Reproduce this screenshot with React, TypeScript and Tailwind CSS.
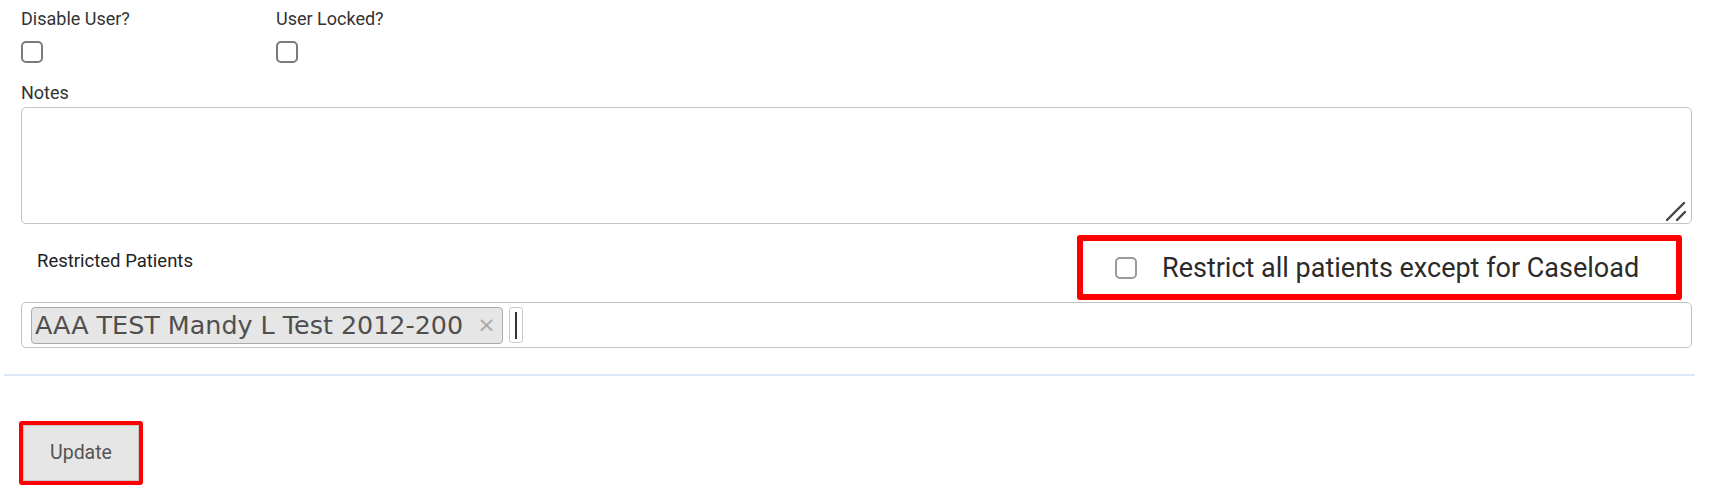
import { useState } from 'react';

const roboto = { fontFamily: 'Roboto, "Liberation Sans", sans-serif' };

function Box({ light }: { light?: boolean }) {
  return (
    <span
      className={
        'block w-[22px] h-[22px] rounded-[5px] bg-white border-2 ' +
        (light ? 'border-[#9a9a9a]' : 'border-[#7b7b7b]')
      }
    />
  );
}

export default function App() {
  const [notes, setNotes] = useState('');

  return (
    <div className="w-[1721px] h-[504px] bg-white text-[#333]" style={roboto}>
      <div className="pl-[21px] pr-[29px] pt-[8px]">
        {/* flags */}
        <div className="flex">
          <div className="w-[255px]">
            <div className="text-[18px] leading-[22px]">Disable User?</div>
            <div className="mt-[11px]">
              <Box />
            </div>
          </div>
          <div>
            <div className="text-[18px] leading-[22px]">User Locked?</div>
            <div className="mt-[11px]">
              <Box />
            </div>
          </div>
        </div>

        <div className="mt-[19px] text-[18px] leading-[22px]">Notes</div>
        <div className="relative mt-[3px] h-[117px]">
          <textarea
            value={notes}
            onChange={(e) => setNotes(e.target.value)}
            className="block w-full h-full resize-none rounded-[5px] border border-[#c4c4c4] bg-white outline-none"
          />
          <svg className="absolute right-[5px] bottom-[2px]" width="22" height="22" viewBox="0 0 22 22">
            <line x1="2" y1="20" x2="19" y2="3" stroke="#444" strokeWidth="2.4" strokeLinecap="round" />
            <line x1="12" y1="20" x2="20" y2="12" stroke="#444" strokeWidth="2.4" strokeLinecap="round" />
          </svg>
        </div>

        {/* restricted patients */}
        <div className="flex justify-between items-start">
          <div className="ml-[16px] mt-[26px] text-[18.5px] leading-[22px] text-[#222]">Restricted Patients</div>
          <div className="mt-[11px] mr-[10px] w-[605px] h-[65px] border-[6px] border-[#ff0000] rounded-[3px] flex items-center pl-[32px]">
            <Box light />
            <span className="ml-[25px] text-[27px] leading-[30px] text-[#2b2b2b]">
              Restrict all patients except for Caseload
            </span>
          </div>
        </div>

        <div className="mt-[2px] h-[46px] rounded-[5px] border border-[#c4c4c4] flex items-center pl-[9px] gap-[6px]">
          <div
            className="h-[37px] flex items-center rounded-[4px] border border-[#aaa] bg-[#e6e6e6] pl-[3px] pr-[6px] text-[#4f4f4f]"
            style={{ fontFamily: '"DejaVu Sans", Verdana, sans-serif' }}
          >
            <span className="text-[25.4px] leading-[30px]">AAA TEST Mandy L Test 2012-200</span>
            <span className="ml-[14px] text-[22px] leading-[22px] text-[#a8a8a8]">×</span>
          </div>
          <div className="w-[14px] h-[36px] rounded-[3px] border border-[#c8c8c8] flex items-center justify-center">
            <span className="block w-[2px] h-[27px] bg-[#333]" />
          </div>
        </div>
      </div>

      {/* divider */}
      <div className="ml-[4px] mr-[26px] mt-[26px] h-[2px] bg-[#dce7f7]" />

      <div className="pl-[19px] mt-[45px]">
        <div className="w-[124px] h-[64px] border-[4px] border-[#ff0000] rounded-[3px]">
          <button className="w-full h-full border border-[#c9c9c9] bg-[#e6e6e6] text-[19.5px] text-[#555]" style={roboto}>
            Update
          </button>
        </div>
      </div>
    </div>
  );
}
